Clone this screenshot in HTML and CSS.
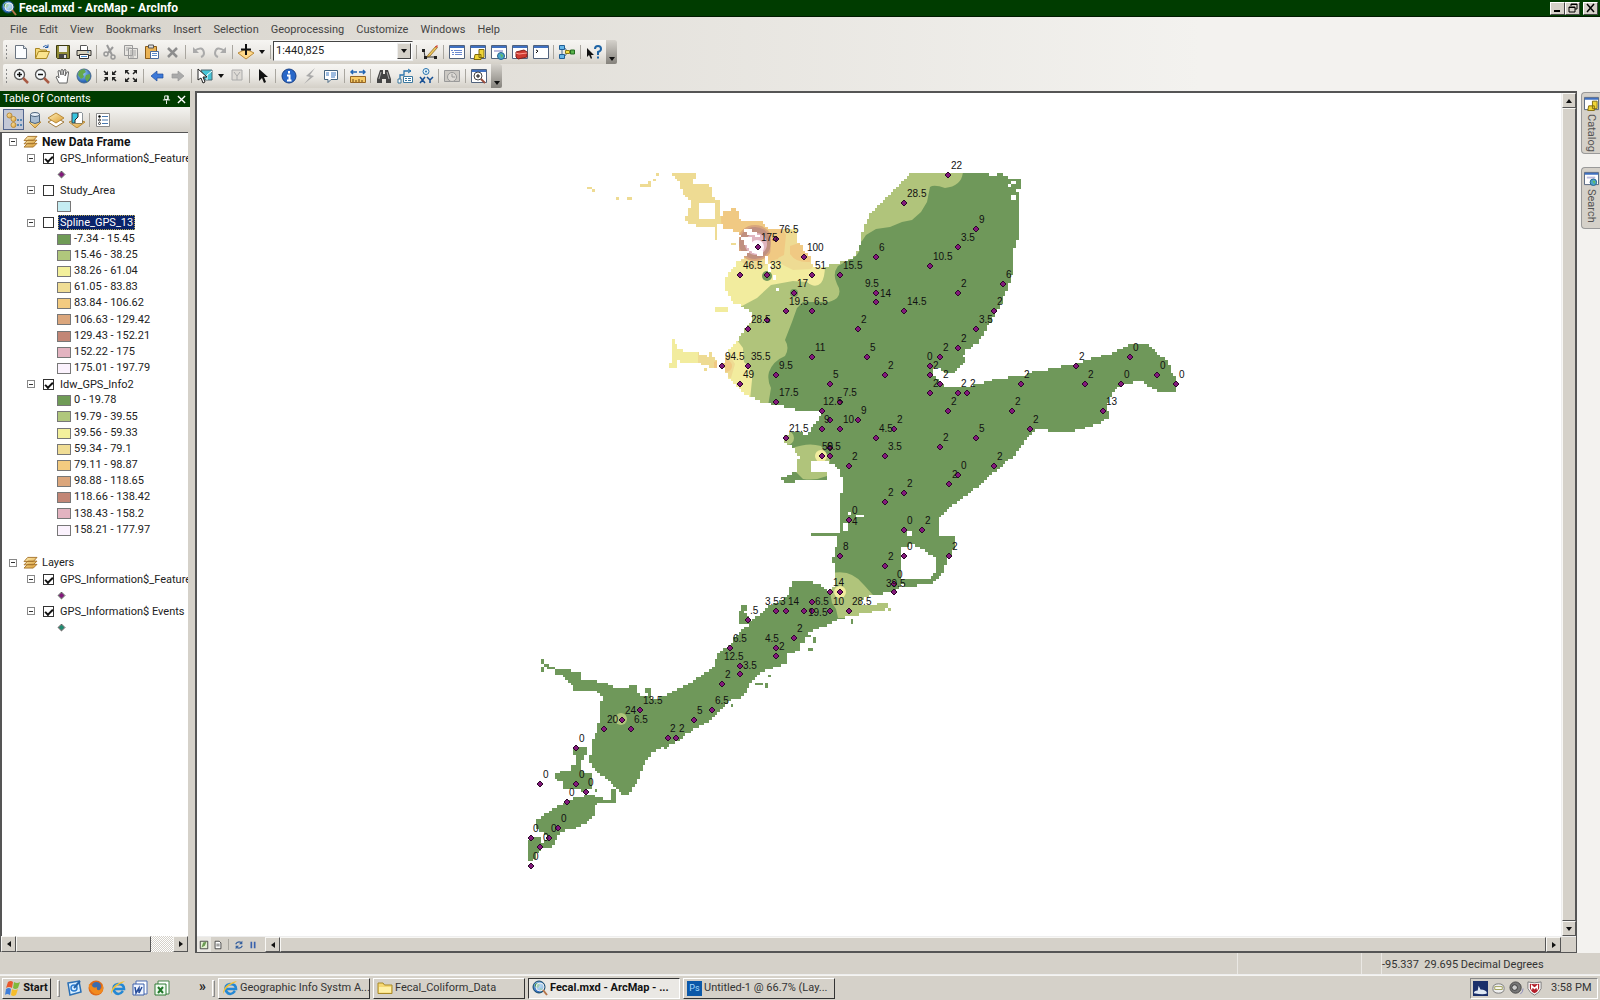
FILE: index.html
```html
<!DOCTYPE html>
<html lang="en">
<head>
<meta charset="utf-8">
<title>Fecal.mxd - ArcMap - ArcInfo</title>
<link rel="stylesheet" href="styles.css">
</head>
<body>
<svg class="defs" aria-hidden="true">
  <defs>
    <linearGradient id="gold" x1="0" y1="0" x2="1" y2="1"><stop offset="0" stop-color="#fff0b8"/><stop offset="1" stop-color="#d99a30"/></linearGradient>
    <radialGradient id="ball" cx=".4" cy=".3" r=".7"><stop offset="0" stop-color="#9ed0f4"/><stop offset="1" stop-color="#1b58b0"/></radialGradient>
  </defs>
  <symbol id="app" viewBox="0 0 16 16"><circle cx="7" cy="7" r="6" fill="url(#ball)" stroke="#174a66"/><path d="M3 4l3-1 2 2-2 3-3-1zM8 8l3 1-2 3z" fill="#4b9a50"/><circle cx="8" cy="7" r="4" fill="#d8f2ff" fill-opacity=".6" stroke="#eee"/><path d="M11 10l4 5" stroke="#b5754a" stroke-width="2"/></symbol>
  <symbol id="new" viewBox="0 0 16 16"><path d="M2.500 1.500h8l3 3v10h-11z" fill="#fbfdff" stroke="#6a7480"/><path d="M10.500 1.500v3h3" fill="#dce6f0" stroke="#6a7480"/></symbol>
  <symbol id="open" viewBox="0 0 16 16"><path d="M1.500 14V4.500h4l1 1.500h6v3" fill="#f5d978" stroke="#a88624"/><path d="M1.500 14.500l3-7h11l-3 7z" fill="#fbe48e" stroke="#a88624"/><path d="M9 3q3-3 5 0m0-2.500V3.500h-3" fill="none" stroke="#2058a8"/></symbol>
  <symbol id="save" viewBox="0 0 16 16"><path d="M1.500 1.500h13v13h-12l-1-1z" fill="#8f8a35" stroke="#3c3a12"/><path d="M4 2h8v6H4z" fill="#eee"/><path d="M4 10h8v4H4z" fill="#444"/><path d="M9 11h2v3H9z" fill="#ddd"/></symbol>
  <symbol id="print" viewBox="0 0 16 16"><path d="M4.500 6V1.500h6l1 1V6" fill="#fff" stroke="#555"/><path d="M1 6.500h14v5H1z" fill="#d9d4c0" stroke="#333"/><path d="M3.500 10.500h9v4h-9z" fill="#fff" stroke="#333"/><path d="M5 12.500h6M11 8h2" stroke="#4a8fd0"/></symbol>
  <symbol id="cut" viewBox="0 0 16 16"><path d="M5 1l5 10M11 3L6 9" stroke="#999" stroke-width="2"/><circle cx="4" cy="10" r="2" fill="none" stroke="#999" stroke-width="1.500"/><circle cx="11" cy="13" r="2" fill="none" stroke="#999" stroke-width="1.500"/></symbol>
  <symbol id="copy" viewBox="0 0 16 16"><path d="M1.500 1.500h8v10h-8zM5.500 4.500h9v10h-9z" fill="#e8e6e2" stroke="#999"/><path d="M3 4h5M3 6h2M7 7h6M7 9h6M7 11h6M7 13h4" stroke="#a5a5a5"/></symbol>
  <symbol id="paste" viewBox="0 0 16 16"><path d="M1.500 2.500h11v12h-11z" fill="#eab355" stroke="#8a5b19"/><path d="M4.500 1h5v3h-5z" fill="#ddd" stroke="#555"/><path d="M6.500 7.500h8v7h-8z" fill="#fff" stroke="#496a9c"/><path d="M8 9.500h5M8 11.500h5" stroke="#5b8ccc"/></symbol>
  <symbol id="del" viewBox="0 0 16 16"><path d="M3 4l9 9M12 4l-9 9" stroke="#8d8d8d" stroke-width="2.500"/></symbol>
  <symbol id="undo" viewBox="0 0 16 16"><path d="M3 7q9-6 10 2 0 3-3 4" fill="none" stroke="#aaa" stroke-width="2"/><path d="M2 3v6h6z" fill="#aaa"/></symbol>
  <symbol id="redo" viewBox="0 0 16 16"><path d="M13 7Q4 1 3 9q0 3 3 4" fill="none" stroke="#aaa" stroke-width="2"/><path d="M14 3v6H8z" fill="#aaa"/></symbol>
  <symbol id="add" viewBox="0 0 16 16"><path d="M0 9l8-4 8 4-8 6z" fill="#ffd98a" stroke="#bb8a3a"/><path d="M8 0v11M3 5.500h10" stroke="#111" stroke-width="2"/></symbol>
  <symbol id="edit" viewBox="0 0 16 16"><path d="M2 7l1 6h10" fill="none" stroke="#333"/><path d="M0 5h3v3H0zM2 12h3v3H2zM12 12h3v3h-3z" fill="#222"/><path d="M6 11l8-9 1.500 1.500L8 12l-3 1z" fill="#f1c95c" stroke="#7b5a1d" stroke-width=".7"/><path d="M13 3l2-2 1 1-2 2z" fill="#d4453d"/></symbol>
  <symbol id="win" viewBox="0 0 16 16"><path d="M.5 1.500h15v13H.5z" fill="#fff" stroke="#51627c"/><path d="M1 2h14v2H1z" fill="#3f70c0"/></symbol>
  <symbol id="tocw" viewBox="0 0 16 16"><use href="#win"/><path d="M2 6.500h2M5 6.500h8M3 8.500h2M6 8.500h7M3 10.500h2M6 10.500h7" stroke="#6b8ad0"/></symbol>
  <symbol id="catw" viewBox="0 0 16 16"><use href="#win"/><path d="M9 5.500h5v8H9zM5 10.500h6v5H4z" fill="#f0d536" stroke="#806b0b"/></symbol>
  <symbol id="seaw" viewBox="0 0 16 16"><use href="#win"/><path d="M3 6h9v2H3z" fill="#bbd"/><circle cx="10" cy="12" r="3.500" fill="#4ba6c9" stroke="#24628f"/><path d="M9 10l3 1-1 3z" fill="#64bd54"/></symbol>
  <symbol id="boxw" viewBox="0 0 16 16"><use href="#win"/><path d="M4 8l8-2 3 2v5l-9 2-2-2z" fill="#cf3a31" stroke="#84201b"/><path d="M4 9l3 1 8-1" stroke="#ff9c90" fill="none"/></symbol>
  <symbol id="pyw" viewBox="0 0 16 16"><use href="#win"/><path d="M3 6l2 1-2 2" stroke="#111" fill="none"/></symbol>
  <symbol id="model" viewBox="0 0 16 16"><path d="M3 4v9M5 3l4 5-4 5M9 8h4" stroke="#47698a" fill="none"/><path d="M.5 1.500h5v4h-5zM.5 10.500h5v4h-5z" fill="#66b6ea" stroke="#205e94"/><path d="M6.500 6.500h4v3h-4z" fill="#f3df4a" stroke="#8a7a17"/><path d="M11.500 6h4v4h-4z" fill="#57b24a" stroke="#256b20"/></symbol>
  <symbol id="what" viewBox="0 0 16 16"><path d="M1 4v9l2-2 2 4 1-1-1-3h3z" fill="#111"/><path d="M9 5q0-3 3-3t3 3q0 2-3 3v3M12 12.500v2" fill="none" stroke="#1e64a5" stroke-width="2"/></symbol>
  <symbol id="lens" viewBox="0 0 16 16"><circle cx="6.500" cy="6.500" r="5" fill="#f8fbfd" stroke="#555" stroke-width="1.300"/><path d="M10 10l5 5" stroke="#a85a44" stroke-width="2.500"/><path d="M4 6.500h5" stroke="#111" stroke-width="1.500"/></symbol>
  <symbol id="zin" viewBox="0 0 16 16"><use href="#lens"/><path d="M6.500 4v5" stroke="#111" stroke-width="1.500"/></symbol>
  <symbol id="hand" viewBox="0 0 16 16"><path d="M4 15L1 9q1-2 3 1L3 3q1-1 2 0l1 4V2q1-1 2 0v5l1-5q1-1 2 0l-1 6 2-4q2-1 1.500 1L12 15z" fill="#fff" stroke="#666"/></symbol>
  <symbol id="globe" viewBox="0 0 16 16"><circle cx="8" cy="8" r="7" fill="url(#ball)" stroke="#476a8a"/><path d="M3 3l5-2 2 3-3 2 1 3-3 2-3-4zM10 7l4-1v4l-3 4-2-4z" fill="#65a84a"/></symbol>
  <symbol id="fin" viewBox="0 0 16 16"><path d="M2 3l3 3M14 3l-3 3M2 13l3-3M14 13l-3-3" stroke="#222" stroke-width="1.500"/><path d="M6 3v4H2zM10 3v4h4zM6 13V9H2zM10 13V9h4z" fill="#222"/></symbol>
  <symbol id="fout" viewBox="0 0 16 16"><path d="M3 3l3 3M13 3l-3 3M3 13l3-3M13 13l-3-3" stroke="#222" stroke-width="1.500"/><path d="M2 2h4L2 6zM14 2h-4l4 4zM2 14h4l-4-4zM14 14h-4l4-4z" fill="#222"/></symbol>
  <symbol id="back" viewBox="0 0 16 16"><path d="M2 8l6-5v3h6v4H8v3z" fill="#3c79d8" stroke="#204f9e" stroke-width=".7"/></symbol>
  <symbol id="fwd" viewBox="0 0 16 16"><path d="M14 8L8 3v3H2v4h6v3z" fill="#aaa" stroke="#999" stroke-width=".7"/></symbol>
  <symbol id="sel" viewBox="0 0 16 16"><path d="M4 2h11v10H8z" fill="#45c4d6" stroke="#4c6670"/><path d="M15 3l-5 4v5" stroke="#fff" fill="none"/><path d="M1 1v11l3-2 2 5 2-1-2-5h4z" fill="#fff" stroke="#222"/></symbol>
  <symbol id="clear" viewBox="0 0 16 16"><path d="M3 2h10v10H3z" fill="#dedbd6" stroke="#aaa"/><path d="M5 4l3 4v4M11 4L8 8" stroke="#aaa" fill="none"/></symbol>
  <symbol id="ptr" viewBox="0 0 16 16"><path d="M4 1v12l3-3 2 5 2-1-2-5h4z" fill="#111"/></symbol>
  <symbol id="info" viewBox="0 0 16 16"><circle cx="8" cy="8" r="7" fill="#2867c8" stroke="#173f86"/><path d="M8 3v2.500M6 7.500h2.500V12M6 12.500h4.500" stroke="#fff" stroke-width="2" fill="none"/></symbol>
  <symbol id="bolt" viewBox="0 0 16 16"><path d="M13 0L4 8l4 1-6 7 10-8-4-1z" fill="#aaa"/></symbol>
  <symbol id="html" viewBox="0 0 16 16"><path d="M1.500 2.500h13v9H8l-3 3v-3H1.500z" fill="#fff" stroke="#446480"/><path d="M3 5h3M3 7h3M8 5h5M8 7h5M8 9h4" stroke="#3c79c0"/></symbol>
  <symbol id="meas" viewBox="0 0 16 16"><path d="M.5 8.500h15v6H.5z" fill="#f6c966" stroke="#966522"/><path d="M3 11v3M6 12v2M9 11v3M12 12v2" stroke="#6b430f"/><path d="M1 4h6M9 4h6M3 2L1 4l2 2M13 2l2 2-2 2" stroke="#1f63b3" stroke-width="1.500" fill="none"/></symbol>
  <symbol id="find" viewBox="0 0 16 16"><path d="M4 2h3v4h2V2h3l3 9v4h-5v-4H6v4H1v-4z" fill="#444"/><path d="M5 4l-2 7M11 4l2 7" stroke="#aaa"/></symbol>
  <symbol id="route" viewBox="0 0 16 16"><path d="M3 14V7h4V3h7" stroke="#2a74ad" fill="none" stroke-width="1.300"/><path d="M11 1l3 2-3 2" fill="none" stroke="#2a74ad"/><path d="M6.500 8.500h9v6h-9zM1 11h3v4H1z" fill="#fff" stroke="#3b789f"/><path d="M8 10.500h2M11 10.500h3M8 12.500h2M11 12.500h3" stroke="#3b789f"/></symbol>
  <symbol id="xy" viewBox="0 0 16 16"><circle cx="8" cy="3.500" r="3" fill="#e5f2fb" stroke="#2a74ad"/><circle cx="8" cy="3.500" r="1" fill="#2a74ad"/><path d="M2 9l5 6M7 9l-5 6M9 9l3 3 3-3M12 12v3" stroke="#164f94" stroke-width="1.500" fill="none"/></symbol>
  <symbol id="time" viewBox="0 0 16 16"><path d="M.5 2.500h15v11H.5z" fill="#ccc9c4" stroke="#999"/><circle cx="8" cy="9" r="4.500" fill="#dedbd6" stroke="#999"/><path d="M8 6v3h3" stroke="#999" fill="none"/></symbol>
  <symbol id="view" viewBox="0 0 16 16"><use href="#win"/><circle cx="7" cy="8" r="4" fill="#fff" stroke="#444"/><path d="M5 8h4M7 6v4" stroke="#111"/><path d="M10 11l4 4" stroke="#9a4c3b" stroke-width="2"/></symbol>
  <symbol id="t1" viewBox="0 0 16 16"><circle cx="3.500" cy="3.500" r="2.500" fill="url(#gold)" stroke="#b98b3a"/><circle cx="7.500" cy="7" r="2.500" fill="url(#gold)" stroke="#b98b3a"/><circle cx="7.500" cy="13" r="2.500" fill="url(#gold)" stroke="#b98b3a"/><path d="M11 8h2M14 8h2M11 13h2M14 13h2" stroke="#3471a8" stroke-width="1.500"/></symbol>
  <symbol id="t2" viewBox="0 0 16 16"><path d="M2 10h12l-6 6z" fill="url(#gold)" stroke="#b98b3a"/><path d="M3.500 2v8q4.500 3 9 0V2" fill="#a9bdd2" stroke="#4d647c"/><ellipse cx="8" cy="2.500" rx="4.500" ry="2" fill="#e7eff7" stroke="#4d647c"/></symbol>
  <symbol id="t3" viewBox="0 0 16 16"><path d="M0 10l8-4 8 4-8 5z" fill="#fff" stroke="#a07a3a"/><path d="M0 6l8-5 8 5-8 5z" fill="url(#gold)" stroke="#b98b3a"/></symbol>
  <symbol id="t4" viewBox="0 0 16 16"><path d="M0 10l8-3 8 3-8 6z" fill="url(#gold)" stroke="#b98b3a"/><path d="M3 1h10v10H3z" fill="#37c3dd" stroke="#345"/><path d="M9 1v4L6 8v3h7V1z" fill="#fff"/><path d="M9 1v4L6 8v3" stroke="#222" fill="none"/></symbol>
  <symbol id="t5" viewBox="0 0 16 16"><path d="M1.500 1.500h13v13h-13z" fill="#fff" stroke="#8a8a8a"/><circle cx="4.500" cy="4.500" r="1.200"/><circle cx="4.500" cy="8" r="1" fill="#fff" stroke="#333"/><circle cx="4.500" cy="11.500" r="1" fill="#fff" stroke="#333"/><path d="M7 4.500h6M7 8h6M7 11.500h6" stroke="#4878ae"/></symbol>
  <symbol id="stack" viewBox="0 0 16 14"><path d="M1 13l4-4h10l-4 4zM1 9.500l4-4h10l-4 4zM1 6l4-4.500h10L11 6z" fill="url(#gold)" stroke="#a5732a"/></symbol>
  <symbol id="mail" viewBox="0 0 16 16"><path d="M2 3l11-2 2 11-11 3z" fill="#d9efff" stroke="#2a6fb5" stroke-width="1.500"/><circle cx="8" cy="8" r="3" fill="none" stroke="#2b7bcf" stroke-width="1.500"/><path d="M8 8l6-7" stroke="#2462a8" stroke-width="2"/></symbol>
  <symbol id="fox" viewBox="0 0 16 16"><circle cx="8" cy="8" r="7.500" fill="#e06a18"/><circle cx="8.500" cy="6.500" r="4.500" fill="#3b6cae"/><path d="M1 4q2 0 4 3 2 1 4 0-1 4 3 3 3-2 2-7 3 6-1 10-5 3-9-1Q0 8 1 4" fill="#f28a1c"/></symbol>
  <symbol id="ie" viewBox="0 0 16 16"><path d="M13 11q-5 6-9 0-2-6 4-7 6 0 6 5H5" fill="none" stroke="#2488d4" stroke-width="2.600"/><path d="M1 14Q1 4 15 1q-2 2-5 3Q4 7 1 14" fill="#f0bf35"/></symbol>
  <symbol id="word" viewBox="0 0 16 16"><path d="M4 1h11v13H4z" fill="#fff" stroke="#4e6fb5"/><path d="M1 4h11v11H1z" fill="#f0f5ff" stroke="#3c60ac"/><path d="M3 7l1 6 3-5v5l3-6" fill="none" stroke="#264c9b" stroke-width="1.500"/></symbol>
  <symbol id="excel" viewBox="0 0 16 16"><path d="M4 1h11v13H4z" fill="#fff" stroke="#47874a"/><path d="M1 4h11v11H1z" fill="#effbef" stroke="#2e7a34"/><path d="M4 7l5 6M9 7l-5 6" stroke="#23782b" stroke-width="2"/></symbol>
  <symbol id="folder" viewBox="0 0 16 16"><path d="M1 13.500V3h5l1.500 2H15v8.500z" fill="#f6d873" stroke="#a98926"/><path d="M2 7h12v5.500H2z" fill="#fff0a5"/></symbol>
  <symbol id="flag" viewBox="0 0 16 16"><path d="M3 2q3-2 5 0L7 8Q4 6 1 8z" fill="#e9582b"/><path d="M9 2q3 2 6 0l-2 6q-3 2-5 0z" fill="#7fb93a"/><path d="M1 9q3-2 5 0l-1 6q-3-2-5 0z" fill="#3f7fd9"/><path d="M7 9q3 2 6 0l-2 6q-3 2-5 0z" fill="#f5bd2c"/></symbol>
  <symbol id="refresh" viewBox="0 0 12 12"><path d="M2 5q2-4 7-2M10 7q-2 4-7 2" stroke="#345f9e" stroke-width="1.500" fill="none"/><path d="M10 1v4H6zM2 11V7h4z" fill="#345f9e"/></symbol>
  <symbol id="pg" viewBox="0 0 12 12"><path d="M2.500 1.500h5l2 2v7h-7z" fill="#fff" stroke="#333"/><path d="M4 5h4M4 7h4" stroke="#555"/></symbol>
  <symbol id="dv" viewBox="0 0 12 12"><path d="M1.500 1.500h9v9h-9z" fill="#e4f0d4" stroke="#333"/><path d="M3 9l2-6 4-1-2 5z" fill="#6b9a53"/></symbol>
</svg>

<header class="titlebar">
  <svg class="i16"><use href="#app"/></svg>
  <h1>Fecal.mxd - ArcMap - ArcInfo</h1>
  <div class="winbtns">
    <button aria-label="Minimize"><svg viewBox="0 0 12 10"><path d="M2 8h6" stroke="#000" stroke-width="2"/></svg></button>
    <button aria-label="Restore"><svg viewBox="0 0 12 10"><path d="M4 1h6v5H8M4 1v2M2 4h6v5H2zM4 1.500h6M2 4.500h6" fill="none" stroke="#000"/></svg></button>
    <button class="close" aria-label="Close"><svg viewBox="0 0 12 10"><path d="M2 1l7 8M9 1L2 9" stroke="#000" stroke-width="1.500"/></svg></button>
  </div>
</header>

<div class="bars">
  <nav class="menu">
    <button>File</button><button>Edit</button><button>View</button><button>Bookmarks</button><button>Insert</button><button>Selection</button><button>Geoprocessing</button><button>Customize</button><button>Windows</button><button>Help</button>
  </nav>
  <div class="tool" role="toolbar" aria-label="Standard">
    <i class="grip"></i>
    <button aria-label="New"><svg><use href="#new"/></svg></button><button aria-label="Open"><svg><use href="#open"/></svg></button><button aria-label="Save"><svg><use href="#save"/></svg></button><button aria-label="Print"><svg><use href="#print"/></svg></button>
    <i class="sep"></i>
    <button aria-label="Cut"><svg><use href="#cut"/></svg></button><button aria-label="Copy"><svg><use href="#copy"/></svg></button><button aria-label="Paste"><svg><use href="#paste"/></svg></button><button aria-label="Delete"><svg><use href="#del"/></svg></button>
    <i class="sep"></i>
    <button aria-label="Undo"><svg><use href="#undo"/></svg></button><button aria-label="Redo"><svg><use href="#redo"/></svg></button>
    <i class="sep"></i>
    <button aria-label="Add data"><svg><use href="#add"/></svg></button><button class="drop" aria-label="Add data options"><i class="down"></i></button>
    <i class="sep wide"></i>
    <span class="combo"><select aria-label="Map scale"><option>1:440,825</option></select><span class="combo-btn"><i class="down"></i></span></span>
    <i class="sep wide"></i>
    <button aria-label="Editor"><svg><use href="#edit"/></svg></button>
    <i class="sep wide"></i>
    <button aria-label="Table of contents"><svg><use href="#tocw"/></svg></button><button aria-label="Catalog window"><svg><use href="#catw"/></svg></button><button aria-label="Search window"><svg><use href="#seaw"/></svg></button><button aria-label="Toolbox"><svg><use href="#boxw"/></svg></button><button aria-label="Python"><svg><use href="#pyw"/></svg></button>
    <i class="sep"></i>
    <button aria-label="Model builder"><svg><use href="#model"/></svg></button>
    <i class="sep wide"></i>
    <button aria-label="What's this"><svg><use href="#what"/></svg></button>
    <button class="more" aria-label="Toolbar options"><i class="down"></i></button>
  </div>
  <div class="tool" role="toolbar" aria-label="Tools">
    <i class="grip"></i>
    <button aria-label="Zoom in"><svg><use href="#zin"/></svg></button><button aria-label="Zoom out"><svg><use href="#lens"/></svg></button><button aria-label="Pan"><svg><use href="#hand"/></svg></button><button aria-label="Full extent"><svg><use href="#globe"/></svg></button>
    <i class="sep"></i>
    <button aria-label="Fixed zoom in"><svg><use href="#fin"/></svg></button><button aria-label="Fixed zoom out"><svg><use href="#fout"/></svg></button>
    <i class="sep"></i>
    <button aria-label="Previous extent"><svg><use href="#back"/></svg></button><button aria-label="Next extent"><svg><use href="#fwd"/></svg></button>
    <i class="sep wide"></i>
    <button aria-label="Select features"><svg><use href="#sel"/></svg></button><button class="drop" aria-label="Select options"><i class="down"></i></button><button aria-label="Clear selection"><svg><use href="#clear"/></svg></button>
    <i class="sep"></i>
    <button aria-label="Select elements"><svg><use href="#ptr"/></svg></button>
    <i class="sep"></i>
    <button aria-label="Identify"><svg><use href="#info"/></svg></button><button aria-label="Hyperlink"><svg><use href="#bolt"/></svg></button><button aria-label="HTML popup"><svg><use href="#html"/></svg></button>
    <i class="sep wide"></i>
    <button aria-label="Measure"><svg><use href="#meas"/></svg></button>
    <i class="sep"></i>
    <button aria-label="Find"><svg><use href="#find"/></svg></button><button aria-label="Find route"><svg><use href="#route"/></svg></button><button aria-label="Go to XY"><svg><use href="#xy"/></svg></button>
    <i class="sep"></i>
    <button aria-label="Time slider"><svg><use href="#time"/></svg></button>
    <i class="sep wide"></i>
    <button aria-label="Viewer"><svg><use href="#view"/></svg></button>
    <button class="more" aria-label="Toolbar options"><i class="down"></i></button>
  </div>
</div>

<main class="work">
  <aside class="toc">
    <div class="toc-head"><h2>Table Of Contents</h2>
      <button aria-label="Pin"><svg viewBox="0 0 10 10"><path d="M3 1h4v4H3zM1 5.500h8M5 6v4M6 1v4" fill="none" stroke="#fff"/></svg></button>
      <button aria-label="Close panel"><svg viewBox="0 0 10 10"><path d="M1 1l8 8M9 1L1 9" stroke="#fff" stroke-width="1.500"/></svg></button>
    </div>
    <div class="toc-tools">
      <button class="on" aria-label="List by drawing order"><svg><use href="#t1"/></svg></button><button aria-label="List by source"><svg><use href="#t2"/></svg></button><button aria-label="List by visibility"><svg><use href="#t3"/></svg></button><button aria-label="List by selection"><svg><use href="#t4"/></svg></button><i class="sep"></i><button aria-label="Options"><svg><use href="#t5"/></svg></button>
    </div>
    <div class="tree">
      <section class="frame">
        <h3 class="bold"><i class="exp"></i><svg><use href="#stack"/></svg>New Data Frame</h3>
        <label class="layer"><i class="exp"></i><input type="checkbox" checked><span>GPS_Information$_Features</span></label>
        <div class="leg pt"><i class="dia"></i></div>
        <label class="layer"><i class="exp"></i><input type="checkbox"><span>Study_Area</span></label>
        <div class="leg"><i class="sw c0"></i></div>
        <label class="layer"><i class="exp"></i><input type="checkbox"><span class="picked">Spline_GPS_13</span></label>
        <div class="leg"><i class="sw c1"></i>-7.34 - 15.45</div>
        <div class="leg"><i class="sw c2"></i>15.46 - 38.25</div>
        <div class="leg"><i class="sw c3"></i>38.26 - 61.04</div>
        <div class="leg"><i class="sw c4"></i>61.05 - 83.83</div>
        <div class="leg"><i class="sw c5"></i>83.84 - 106.62</div>
        <div class="leg"><i class="sw c6"></i>106.63 - 129.42</div>
        <div class="leg"><i class="sw c7"></i>129.43 - 152.21</div>
        <div class="leg"><i class="sw c8"></i>152.22 - 175</div>
        <div class="leg"><i class="sw c9"></i>175.01 - 197.79</div>
        <label class="layer"><i class="exp"></i><input type="checkbox" checked><span>Idw_GPS_Info2</span></label>
        <div class="leg"><i class="sw c1"></i>0 - 19.78</div>
        <div class="leg"><i class="sw c2"></i>19.79 - 39.55</div>
        <div class="leg"><i class="sw c3"></i>39.56 - 59.33</div>
        <div class="leg"><i class="sw c4"></i>59.34 - 79.1</div>
        <div class="leg"><i class="sw c5"></i>79.11 - 98.87</div>
        <div class="leg"><i class="sw c6"></i>98.88 - 118.65</div>
        <div class="leg"><i class="sw c7"></i>118.66 - 138.42</div>
        <div class="leg"><i class="sw c8"></i>138.43 - 158.2</div>
        <div class="leg"><i class="sw c9"></i>158.21 - 177.97</div>
      </section>
      <section class="frame">
        <h3><i class="exp"></i><svg><use href="#stack"/></svg>Layers</h3>
        <label class="layer"><i class="exp"></i><input type="checkbox" checked><span>GPS_Information$_Features</span></label>
        <div class="leg pt"><i class="dia"></i></div>
        <label class="layer"><i class="exp"></i><input type="checkbox" checked><span>GPS_Information$ Events</span></label>
        <div class="leg pt"><i class="dia teal"></i></div>
      </section>
    </div>
    <div class="hscroll toc-scroll"><button aria-label="Scroll left"><i class="left"></i></button><i class="thumb"></i><i class="rest"></i><button aria-label="Scroll right"><i class="right"></i></button></div>
  </aside>

  <section class="mapframe">
    <div class="mapview"><svg id="map" viewBox="197 93 1364 843" role="img" aria-label="Fecal coliform map">
      <defs><clipPath id="area"><path id="cells" shape-rendering="crispEdges"/></clipPath></defs>
      <g clip-path="url(#area)">
        <path class="f1" d="M500 160h700v720H500z"/>
        <path class="f2" d="M862 241l4-6 10-6 14-2 12-5 10-2 9-8 6-10 3-15q4-3 15 1 18-2 18-18H855v75z"/>
        <path class="f2" d="M856 256l-18 10q-6 8-1 18 5 8 0 14-6 5-14 4h-20l-6 6-5 14-7 18q5 8 0 16-12 5-16 16-2 8 2 16l-3 18H660V250h200z"/>
        <path class="f2" d="M793 448q15-6 28-2l9 14-3 16q-12 5-24 3l-8-8z"/>
        <circle class="f2" cx="787" cy="438" r="7"/>
        <circle class="f2" cx="621" cy="719" r="6"/>
        <path class="f2" d="M832 573q20-4 32 12l9 10 25 5v18h-60l-2-9-4-6-2-11z"/>
        <path class="f3" d="M742 306l15-8 14-13 22-4 14 1q8 7 14 1 4-5 4-18l-35-60H700v100z"/>
        <path class="f3" d="M737 340l6 8 1 14q9 7 8 18l-2 20h-90v-75z"/>
        <path class="f3" d="M710 302h20v12h-20z"/>
        <circle class="f3" cx="821" cy="456" r="6"/><circle class="f3" cx="840" cy="592" r="6"/>
        <path class="f4" d="M570 165h160l45 55 50 30-14 19-18 1-18-9-20 9-34-20H570z"/>
        <path class="f4" d="M698 350h20l12 6 5 8-4 14-10-2h-23z"/>
        <path class="f5" d="M720 205h30l28 18 8 12-2 20-8 4-10 2-44-28zM790 246l12-4q12 8 8 20-14 1-20-8zM724 358q8 3 8 8t-6 6h-12v-10z"/>
        <circle class="f6" cx="755" cy="243" r="18"/><circle class="f7" cx="755" cy="243" r="16"/><circle class="f8" cx="756" cy="244" r="11"/><circle class="f9" cx="757" cy="247" r="7"/>
        <path class="f5" d="M771 236l8 3 3 8-4 12-8 2z"/>
        <circle class="f1" cx="767" cy="276" r="5"/><circle class="f1" cx="794" cy="293" r="4"/><circle class="f1" cx="767" cy="320" r="2"/>
      </g>
      <g id="sites"></g>
    </svg></div>
    <div class="vscroll"><button aria-label="Scroll up"><i class="up"></i></button><i class="thumb"></i><button aria-label="Scroll down"><i class="down"></i></button></div>
    <div class="hscroll map-scroll">
      <button class="flat on" aria-label="Data view"><svg><use href="#dv"/></svg></button><button class="flat" aria-label="Layout view"><svg><use href="#pg"/></svg></button><i class="sep"></i><button class="flat" aria-label="Refresh"><svg><use href="#refresh"/></svg></button><button class="flat" aria-label="Pause"><svg viewBox="0 0 12 12"><path d="M4 2v8M8 2v8" stroke="#3a62ad" stroke-width="2"/></svg></button>
      <button aria-label="Scroll left"><i class="left"></i></button><i class="thumb"></i><button aria-label="Scroll right"><i class="right"></i></button><i class="corner"></i>
    </div>
  </section>

  <aside class="dock">
    <button><svg><use href="#catw"/></svg><span>Catalog</span></button>
    <button><svg><use href="#seaw"/></svg><span>Search</span></button>
  </aside>
</main>

<footer class="status"><span class="p1"></span><span class="p2"></span><span class="p3">-95.337&nbsp; 29.695 Decimal Degrees</span></footer>

<nav class="taskbar">
  <button class="start"><svg><use href="#flag"/></svg>Start</button>
  <i class="div"></i>
  <div class="quick"><button aria-label="Mail"><svg><use href="#mail"/></svg></button><button aria-label="Firefox"><svg><use href="#fox"/></svg></button><button aria-label="Internet Explorer"><svg><use href="#ie"/></svg></button><button aria-label="Word"><svg><use href="#word"/></svg></button><button aria-label="Excel"><svg><use href="#excel"/></svg></button></div>
  <button class="chev">»</button>
  <i class="div"></i>
  <div class="tasks">
    <button><svg><use href="#ie"/></svg>Geographic Info Systm A...</button>
    <button><svg><use href="#folder"/></svg>Fecal_Coliform_Data</button>
    <button class="active"><svg><use href="#app"/></svg>Fecal.mxd - ArcMap - ...</button>
    <button><span class="ps">Ps</span>Untitled-1 @ 66.7% (Lay...</button>
  </div>
  <div class="tray">
    <svg viewBox="0 0 16 16"><path d="M0 0h16v16H0z" fill="#1a2f6a"/><path d="M1 13q0-3 4-3l1-5 2 4q6 0 7 4-3 2-14 0" fill="#dfe8f4"/></svg>
    <svg viewBox="0 0 16 16"><path d="M2 8q0-5 6-5t6 5-6 5-6-5" fill="#eee" stroke="#777"/><path d="M4 6h8v3H4z" fill="#fff" stroke="#9a9a50"/></svg>
    <svg viewBox="0 0 16 16"><circle cx="7" cy="7" r="6" fill="#777" stroke="#444"/><circle cx="6" cy="7" r="3" fill="#ccc" stroke="#333"/><path d="M12 14q3-2 3-6" stroke="#88b" fill="none"/></svg>
    <svg viewBox="0 0 16 16"><path d="M1 1q7 2 14 0v7q-2 5-7 7-5-2-7-7z" fill="#fff" stroke="#777"/><path d="M3 3q5 1 10 0v5q-2 4-5 5-3-1-5-5z" fill="#b3202a"/><path d="M5 9V5l3 3 3-3v4" fill="none" stroke="#fff" stroke-width="1.500"/></svg>
    <time>3:58 PM</time>
  </div>
</nav>
<script src="map.js"></script>
</body>
</html>
```
FILE: styles.css
```css
* { box-sizing: border-box; }
body {
  margin: 0; min-height: 100vh; display: flex; flex-direction: column;
  background: #d5d1c9; color: #222;
  font: 11px/16px Roboto, "DejaVu Sans", sans-serif;
}
button { font: inherit; color: inherit; border: 0; background: none; padding: 0; margin: 0; display: flex; align-items: center; justify-content: center; }
h1, h2, h3 { margin: 0; font-size: 11px; font-weight: normal; }
svg { width: 16px; height: 16px; flex: none; }
.defs { position: absolute; width: 0; height: 0; }

.titlebar { height: 17px; display: flex; align-items: center; gap: 2px; padding: 0 2px 0 1px; background: #003c00; border-bottom: 1px solid #001a00; color: #fff; }
.titlebar h1 { font-weight: bold; font-size: 12px; flex: 1; }
.winbtns { display: flex; }
.winbtns button { width: 15px; height: 13px; background: #d5d1c9; border: 1px solid; border-color: #fff #444 #444 #fff; }
.winbtns svg { width: 12px; height: 10px; }
.winbtns .close { margin-left: 3px; }

.bars { background: linear-gradient(90deg, #d6d2ca, #f3f2ef 75%); padding-bottom: 3px; }
.menu { height: 23px; display: flex; align-items: center; gap: 12px; padding: 2px 0 0 10px; color: #444; }
.tool { height: 24px; margin-left: 3px; width: max-content; display: flex; align-items: stretch; background: linear-gradient(#f6f5f2, #eceae6 50%, #d4d0c8); border-radius: 2px; }
.tool button { width: 21px; }
.tool .drop { width: 11px; }
.grip { width: 3px; margin: 4px 2px; background: radial-gradient(circle, #888 1px, transparent 1px) 0 0 / 3px 4px; }
.sep { width: 1px; margin: 5px 2px; background: #a9a69f; flex: none; }
.sep.wide { margin: 5px 2px 5px 3px; }
.tool .more { width: 11px; margin-left: 2px; padding-bottom: 3px; align-items: flex-end; background: linear-gradient(#d5d2cc, #85827c); border-radius: 0 2px 2px 0; }
.more .down { border-top-color: #111; }
.down, .up, .left, .right { width: 0; height: 0; border: 4px solid transparent; display: block; }
.down { border-width: 4px 3px 0; border-top-color: #111; }
.up { border-width: 0 3px 4px; border-bottom-color: #111; }
.left { border-width: 3px 4px 3px 0; border-right-color: #111; }
.right { border-width: 3px 0 3px 4px; border-left-color: #111; }
.combo { position: relative; width: 140px; height: 20px; margin: 1px 0; display: flex; border: 1px solid; border-color: #444 #eee #eee #444; background: #fff; }
.combo select { appearance: none; width: 100%; border: 0; background: #fff; font: inherit; color: #222; padding: 0 2px; }
.combo-btn { position: absolute; right: 1px; top: 1px; bottom: 1px; width: 14px; display: flex; align-items: center; justify-content: center; background: #d5d1c9; border: 1px solid; border-color: #eee #444 #444 #eee; pointer-events: none; }

.work { flex: 1; display: flex; min-height: 0; }
.toc { width: 190px; margin-right: 5px; display: flex; flex-direction: column; flex: none; }
.toc-head { height: 16px; display: flex; align-items: center; background: #003c00; color: #fff; padding: 0 1px 0 3px; }
.toc-head h2 { flex: 1; }
.toc-head button { width: 15px; height: 15px; }
.toc-head svg { width: 9px; height: 9px; }
.toc-tools { height: 25px; display: flex; align-items: center; background: linear-gradient(#f4f3f0, #d4d0c8); padding-left: 3px; }
.toc-tools button { width: 21px; height: 21px; }
.toc-tools .sep { height: 14px; }
.toc-tools .on { background: #c3c8d6; border: 1px solid #53658e; }
.tree { flex: 1; background: #fff; border: solid #555; border-width: 1px 0 0 2px; margin-right: 2px; overflow: hidden; }
.frame { margin-bottom: 16px; }
.frame h3 { height: 17px; display: flex; align-items: center; padding-left: 7px; }
.frame h3.bold { font-weight: bold; font-size: 12px; color: #111; }
.frame h3 svg { width: 15px; height: 13px; margin: 0 4px 0 6px; }
.exp { width: 8px; height: 8px; flex: none; border: 1px solid #888; background: linear-gradient(#333, #333) center / 4px 1px no-repeat; }
.layer { height: 16px; display: flex; align-items: center; padding-left: 25px; white-space: nowrap; }
.layer input { appearance: none; width: 11px; height: 11px; margin: 0 4px 0 8px; border: 1px solid #333; background: #fff; flex: none; display: grid; place-items: center; }
.layer input:checked::before { content: ""; width: 6px; height: 3px; border: solid #111; border-width: 0 0 2px 2px; transform: rotate(-45deg); }
.layer span { padding: 0 2px; line-height: 15px; }
.layer .picked { background: #0a246a; color: #fff; outline: 1px dotted #b9a850; outline-offset: -1px; }
.leg { height: 16px; display: flex; align-items: center; gap: 3px; padding-left: 55px; }
.frame > :nth-child(6n) { height: 17px; }
.sw { width: 14px; height: 11px; border: 1px solid #777; }
.pt { padding-left: 57px; }
.dia { width: 5px; height: 5px; background: #82197a; outline: 1px solid #222; transform: rotate(45deg) scale(.8); }
.teal { background: #1f8a70; }
.c0 { background: #c5edf2; } .c1 { background: #6f9b56; } .c2 { background: #b0c77c; } .c3 { background: #f3f09c; } .c4 { background: #f0dd95; }
.c5 { background: #f3cb80; } .c6 { background: #dba67c; } .c7 { background: #c28676; } .c8 { background: #e3b3c0; } .c9 { background: #fbf2fd; }

.hscroll { height: 16px; display: flex; align-items: stretch; }
.hscroll button, .vscroll button, .thumb { background: #d5d1c9; border: 1px solid; border-color: #f8f7f4 #555 #555 #f8f7f4; }
.hscroll button { width: 15px; flex: none; }
.toc-scroll { margin: 0 2px 1px 0; border-left: 1px solid #555; }
.toc-scroll .thumb { flex: 134; }
.rest { flex: 22; background: repeating-conic-gradient(#fff 0 25%, #d5d1c9 0 50%) 0 0 / 2px 2px; }

.mapframe { flex: 1; min-width: 0; display: grid; grid-template: 1fr 16px / 1fr 15px; border: solid #555; border-width: 2px 1px 1px 2px; }
.mapview { position: relative; background: #fff; overflow: hidden; }
.mapview svg { position: absolute; inset: 0; width: 100%; height: 100%; }
.vscroll { display: flex; flex-direction: column; border-left: 1px solid #eee; }
.vscroll button { height: 15px; }
.vscroll .thumb { flex: 1; }
.map-scroll { grid-column: 1 / 3; border-top: 1px solid #eee; }
.map-scroll .thumb { flex: 1; }
.map-scroll .flat { border: 0; width: 14px; }
.map-scroll .flat.on { background: #eae8e3; }
.map-scroll svg { width: 10px; height: 10px; }
.map-scroll .sep { margin: 2px 3px; }
.map-scroll .flat + button:not(.flat) { margin-left: 5px; }
.corner { width: 15px; }

.dock { width: 23px; padding: 1px 0 0 4px; background: #f3f2ef; display: flex; flex-direction: column; gap: 13px; color: #555; }
.dock button { flex-direction: column; justify-content: flex-start; gap: 3px; height: 62px; padding-top: 3px; background: #d5d1c9; border: 1px solid #999; border-right: 0; border-radius: 4px 0 0 4px; }
.dock svg { width: 15px; height: 15px; }
.dock span { writing-mode: vertical-rl; }

.status { height: 22px; display: flex; justify-content: flex-end; border-bottom: 1px solid #eee; }
.status span { border-left: 1px solid #eae8e4; padding: 4px 0 0; }
.p1 { width: 124px; } .p2 { width: 20px; }
.status .p3 { width: 219px; color: #333; }

.taskbar { height: 25px; display: flex; align-items: center; border-top: 1px solid #f5f4f1; padding: 1px 2px; }
.start { width: 49px; height: 21px; gap: 2px; border: 1px solid; border-color: #fff #333 #333 #fff; font-weight: bold; color: #111; }
.div { width: 3px; height: 17px; margin: 0 6px; border: 1px solid; border-color: #fff #888 #888 #fff; }
.quick { display: flex; gap: 6px; width: 118px; padding-left: 0; }
.chev { width: 22px; height: 20px; padding-bottom: 4px; font-size: 14px; font-weight: bold; justify-content: flex-end; }
.tasks { flex: 1; display: flex; gap: 3px; margin-left: -3px; }
.tasks button { width: 152px; height: 21px; justify-content: flex-start; gap: 2px; padding-left: 3px; white-space: nowrap; border: 1px solid; border-color: #fff #333 #333 #fff; color: #333; }
.tasks .active { font-weight: bold; color: #111; border-color: #333 #fff #fff #333; background: #eae8e4; }
.ps { width: 15px; height: 15px; background: #0a58a8; color: #a9dcff; font-size: 9px; line-height: 15px; text-align: center; }
.tray { width: 128px; height: 21px; display: flex; align-items: center; gap: 3px; padding-left: 2px; border: 1px solid; border-color: #888 #fff #fff #888; }
.tray svg { width: 15px; height: 15px; }
.tray time { margin-left: 6px; color: #333; white-space: nowrap; }

.f1 { fill: #6f985a; } .f2 { fill: #b0c47b; } .f3 { fill: #f2ec9e; } .f4 { fill: #eedb93; } .f5 { fill: #f0c983; }
.f6 { fill: #d9a67c; } .f7 { fill: #c09080; } .f8 { fill: #e0b5c0; } .f9 { fill: #fdf5fd; }
.site { fill: #82197a; stroke: #2a0828; stroke-width: 1; }
.val { font: 10px "Liberation Sans", Arial, sans-serif; fill: #111; }
```
FILE: map.js
```js
// Outlines of the interpolated surface: bay, islands, inlets and lakes (even-odd).
const outlines = [
  "912,173 988,173 990,176 1003,174 1010,179 1021,180 1020,190 1017,193 1020,210 1019,237 1014,250 1013,273 1008,287 1002,303 993,318 985,332 978,343 965,351 963,358 967,359 961,366 955,373 945,374 942,369 932,368 933,376 940,380 945,386 963,387 980,384 1000,378 1023,376 1033,372 1060,367 1077,364 1093,358 1110,354 1130,344 1148,343 1158,353 1169,363 1172,374 1177,377 1177,393 1163,393 1150,387 1142,382 1120,384 1113,393 1107,405 1109,417 1102,422 1087,428 1065,433 1050,431 1037,429 1030,434 1023,445 1013,457 995,472 980,485 963,498 950,508 938,520 940,535 955,535 954,550 947,558 944,572 932,583 910,587 902,585 897,591 873,595 860,600 863,606 887,603 888,609 867,613 857,615 842,618 827,625 810,632 807,637 800,650 787,655 788,662 777,667 760,673 750,683 743,697 730,700 720,710 712,720 695,728 677,742 653,752 643,767 638,782 627,796 617,790 612,783 595,770 590,762 592,743 598,730 600,710 602,698 595,690 575,692 570,683 563,676 553,673 547,668 540,667 545,664 557,669 580,672 583,680 602,682 617,688 637,686 640,697 647,697 646,688 652,689 652,699 667,695 683,687 700,677 713,667 717,655 728,646 740,633 753,620 767,608 787,597 793,581 808,580 820,585 828,592 836,586 833,560 838,537 840,527 842,480 838,468 830,463 810,460 810,472 828,473 827,479 800,480 792,482 788,482 781,481 781,478 797,472 799,457 793,448 783,442 783,435 793,432 807,434 820,417 822,412 798,410 777,405 760,402 747,395 730,380 723,365 727,353 737,342 743,332 753,320 753,315 742,305 732,302 726,290 727,275 737,263 745,257 750,252 738,232 723,228 720,222 723,210 737,209 740,220 762,222 767,228 798,230 798,242 810,258 813,267 833,265 853,258 860,247 862,233 870,213 887,197 902,182",
  "669,173 697,174 692,183 708,183 713,190 713,198 720,200 721,224 717,226 717,242 714,238 715,228 687,224 686,217 692,202 683,195 680,182",
  "700,203 715,203 715,220 700,220",
  "675,335 677,350 697,353 709,357 710,350 714,360 719,362 718,369 700,364 677,361 678,368 669,368 672,360 672,340",
  "738,238 750,237 755,241 744,243 758,244 764,258 750,251 738,250",
  "744,228 754,231 761,236 756,237 746,233",
  "902,548 912,544 923,550 937,558 937,572 927,580 902,580",
  "572,752 577,748 587,748 585,757 580,763 583,772 592,773 593,790 586,791 563,790 562,783 556,780 556,773 570,770 570,765 577,764 577,758",
  "580,797 592,794 597,798 610,800 612,790 617,790 617,800 613,804 604,803 597,803 593,817 580,827 560,832 553,847 542,847 533,861 529,861 529,840 540,837 542,844 549,838 543,832 537,830 537,820 540,818 557,807 570,800",
  "737,619 742,606 746,606 745,613 750,617 748,626 740,624"
];
// Loose cells along the coast (x, y, width, height); those inside an outline become gaps.
const specks = "587,187,5,2 593,190,3,2 597,194,5,2 616,197,4,3 628,197,3,2 631,194,3,2 641,191,4,2 641,184,9,2 649,182,3,2 653,179,3,2 656,173,2,2 731,243,4,3 715,308,14,3 705,367,3,3 810,533,28,3 850,619,4,4 889,607,3,3 756,683,6,2 765,684,3,3 768,675,2,2 808,649,5,2 813,638,3,6 664,748,2,2 731,704,2,2 596,790,2,3 600,791,2,2 847,511,4,3 855,514,6,3 862,516,3,2 842,524,6,8 906,532,6,3 1007,185,3,3 1012,181,3,3 1015,190,3,4 1012,196,3,3 774,275,3,6 768,264,3,8 765,256,3,8 776,288,2,4 542,660,2,12 550,669,6,2 808,635,4,3 799,644,5,3 777,666,12,2";

const CELL = 2.667;
const rings = outlines.map(s => s.split(" ").map(p => p.split(",").map(Number)));
specks.split(" ").forEach(s => {
  const [x, y, w, h] = s.split(",").map(Number);
  rings.push([[x, y], [x + w, y], [x + w, y + h], [x, y + h]]);
});
const snap = v => Math.round(Math.round(v / CELL) * CELL);
let d = "";
for (let r = 60; r < 330; r++) {
  const y = (r + .5) * CELL, top = Math.round(r * CELL), h = Math.round((r + 1) * CELL) - top;
  const xs = [];
  rings.forEach(p => p.forEach(([x1, y1], i) => {
    const [x2, y2] = p[(i + 1) % p.length];
    if ((y1 <= y) !== (y2 <= y)) xs.push(x1 + (y - y1) / (y2 - y1) * (x2 - x1));
  }));
  xs.sort((a, b) => a - b);
  for (let i = 0; i + 1 < xs.length; i += 2) {
    const a = snap(xs[i]), b = snap(xs[i + 1]);
    if (b > a) d += `M${a} ${top}h${b - a}v${h}H${a}z`;
  }
}
document.getElementById("cells").setAttribute("d", d);

// Sampling sites: x, y, value, optional label offset.
const sites = [
  [948,175,"22"],[904,203,"28.5"],[976,229,"9"],[958,247,"3.5"],[876,257,"6"],[930,266,"10.5"],[840,275,"15.5"],[1003,284,"6"],
  [876,293,"9.5",-11],[876,302,"14",4,-5],[958,293,"2"],[904,311,"14.5"],[994,311,"2"],[858,329,"2"],[976,329,"3.5"],[958,348,"2"],
  [867,357,"5"],[940,357,"2"],[930,366,"0",-3],[930,375,"2"],[885,375,"2"],[940,384,"2"],[930,393,"2"],[958,393,"2"],[967,393,"2"],
  [1021,384,"2"],[1076,366,"2"],[1085,384,"2"],[1121,384,"0"],[1130,357,"0"],[1157,375,"0"],[1176,384,"0"],[1103,411,"13"],
  [948,411,"2"],[1012,411,"2"],[1030,429,"2"],[894,429,"2"],[858,420,"9"],[840,429,"10"],[876,438,"4.5"],[976,438,"5"],[940,447,"2"],
  [840,402,"7.5"],[830,384,"5"],[776,239,"76.5"],[758,247,"175"],[804,257,"100"],[740,275,"46.5"],[767,275,"33"],[812,275,"51"],
  [794,293,"17"],[786,311,"19.5"],[812,311,"6.5",2],[767,320,""],[748,329,"28.5"],[812,357,"11"],[722,366,"94.5"],[748,366,"35.5"],
  [776,375,"9.5"],[740,384,"49"],[776,402,"17.5"],[822,411,"12.5",1],[830,420,""],[822,429,"9",2],[786,438,"21.5"],[830,448,""],
  [822,456,"59",0],[830,456,"6.5",-3],[849,466,"2"],[885,456,"3.5"],[994,466,"2"],[958,475,"0"],[949,484,"2"],[904,493,"2"],
  [885,502,"2"],[849,520,"0"],[849,520,"4",3,5],[904,530,"0"],[922,530,"2"],[904,556,"0"],[885,566,"2"],[949,556,"2"],[840,556,"8"],
  [894,584,"0"],[894,592,"39.5",-8,-5],[830,592,"14"],[840,592,""],[776,611,"3.5",-11],[786,611,"3",-6],[804,611,"14",-16],
  [812,602,""],[812,611,"6.5"],[812,611,"19.5",-4,5],[830,611,"10"],[849,611,"28.5"],[794,638,"2"],[748,620,".5",2],[730,648,"6.5"],
  [776,648,"4.5",-11],[776,656,"2"],[740,666,"12.5",-16],[740,674,"3.5",3,-5],[722,684,"2"],[712,710,"6.5"],[694,720,"5"],
  [668,738,"2",2],[676,738,"2"],[640,710,"13.5"],[622,720,"24"],[631,729,"6.5"],[604,729,"20"],[576,748,"0"],[540,784,"0"],
  [576,784,"0"],[586,792,"0",2],[567,802,"0",2],[558,828,"0"],[549,838,"0",2],[531,838,"0",2],[540,847,"0"],[531,866,"0",2]
];
document.getElementById("sites").innerHTML =
  sites.map(([x, y]) => `<path class="site" d="M${x - 3} ${y}l3-3 3 3-3 3z"/>`).join("") +
  sites.map(([x, y, t, dx = 3, dy = -6]) => `<text class="val" x="${x + dx}" y="${y + dy}">${t}</text>`).join("");
```
